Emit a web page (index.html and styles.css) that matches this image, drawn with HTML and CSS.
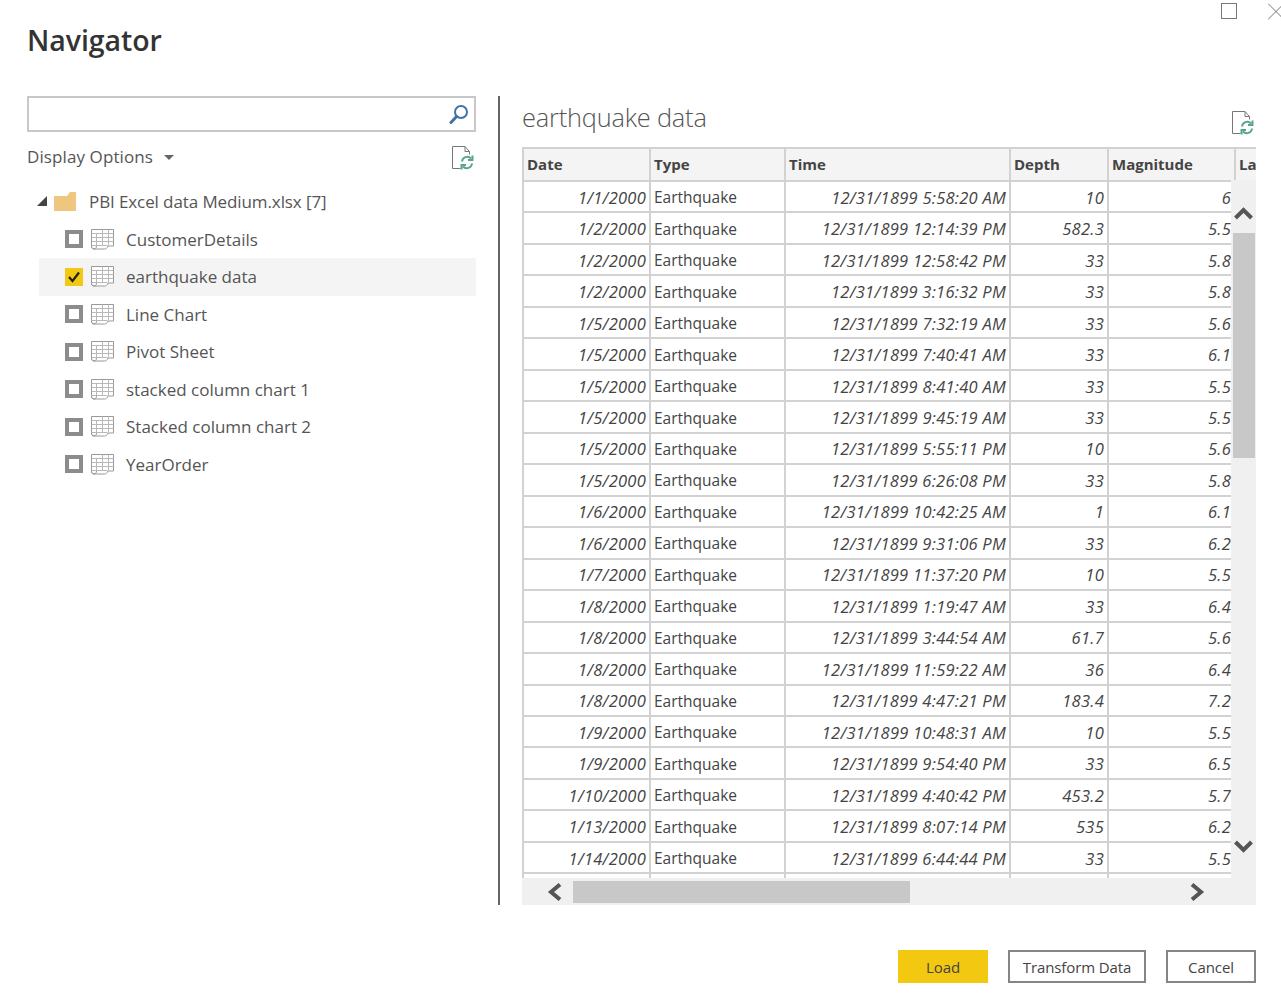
FILE: index.html
```html
<!DOCTYPE html>
<html lang="en">
<head>
<meta charset="utf-8">
<title>Navigator</title>
<link rel="stylesheet" href="styles.css">
</head>
<body>
<svg class="defs" width="0" height="0" aria-hidden="true">
  <symbol id="sheet" viewBox="0 0 23 21">
    <path d="M.5.5h22v16.5h-5.500c-.5 2-2 3-3.500 3H3c-1.500 0-2.500-1-2.500-3z" fill="#fff" stroke="#999"/>
    <path d="M.5 4.500h22M.5 8.500h22M.5 12.500h22M.5 16.500h16M5.500 4.500v12M11.500.5v16M17.500.5v16" fill="none" stroke="#b8b8b8"/>
    <path d="M.5 17c0 2 1 3 2.500 3s2.500-1 2.500-3" fill="none" stroke="#999"/>
  </symbol>
  <symbol id="refresh" viewBox="0 0 22 24">
    <path d="M13 .5H.5v22h8M13 .5v5h4.500M13 .5l4.500 5v3" fill="none" stroke="#777"/>
    <path d="M10 15.500a5.200 5.200 0 0 1 9-3M20.500 9.500V14H16M20 17.500a5.200 5.200 0 0 1-9 3M9.500 23.500V19H14" fill="none" stroke="#5aa58a" stroke-width="2"/>
  </symbol>
</svg>

<div class="win-controls">
  <span class="maximize"></span>
  <svg class="close" width="14" height="17" viewBox="0 0 14 17"><path d="M0 .5l16 16M16 .5l-16 16" fill="none" stroke="#777"/></svg>
</div>

<h1 class="title">Navigator</h1>

<main class="main">
  <section class="left">
    <div class="search">
      <svg width="20" height="20" viewBox="0 0 20 20"><circle cx="12" cy="8" r="6" fill="none" stroke="#3f73a8" stroke-width="2"/><path d="M7.500 12.500L2 18.500" fill="none" stroke="#3f73a8" stroke-width="3" stroke-linecap="round"/></svg>
    </div>
    <div class="options">
      <span class="options-label">Display Options</span>
      <span class="caret"></span>
      <svg class="refresh-left" width="22" height="24"><use href="#refresh"/></svg>
    </div>
    <div class="tree-root">
      <span class="twist"></span>
      <svg class="folder" width="22" height="19" viewBox="0 0 22 19"><path d="M0 4h13l3-4h6v19H0z" fill="#eec67f"/></svg>
      <span>PBI Excel data Medium.xlsx [7]</span>
    </div>
    <ul class="tree">
      <li class="item"><span class="check"></span><svg width="23" height="21"><use href="#sheet"/></svg><span class="label">CustomerDetails</span></li>
      <li class="item selected"><span class="check checked"><svg width="18" height="18" viewBox="0 0 18 18"><path d="M4 9l3.500 4L14 4.500" fill="none" stroke="#222" stroke-width="2.200"/></svg></span><svg width="23" height="21"><use href="#sheet"/></svg><span class="label">earthquake data</span></li>
      <li class="item"><span class="check"></span><svg width="23" height="21"><use href="#sheet"/></svg><span class="label">Line Chart</span></li>
      <li class="item"><span class="check"></span><svg width="23" height="21"><use href="#sheet"/></svg><span class="label">Pivot Sheet</span></li>
      <li class="item"><span class="check"></span><svg width="23" height="21"><use href="#sheet"/></svg><span class="label">stacked column chart 1</span></li>
      <li class="item"><span class="check"></span><svg width="23" height="21"><use href="#sheet"/></svg><span class="label">Stacked column chart 2</span></li>
      <li class="item"><span class="check"></span><svg width="23" height="21"><use href="#sheet"/></svg><span class="label">YearOrder</span></li>
    </ul>
  </section>

  <div class="divider"></div>

  <section class="right">
    <div class="preview-head">
      <h2 class="preview-title">earthquake data</h2>
      <svg class="refresh-right" width="22" height="24"><use href="#refresh"/></svg>
    </div>
    <div class="grid-wrap">
      <div class="grid-view">
        <table class="grid">
          <colgroup><col class="c1"><col class="c2"><col class="c3"><col class="c4"><col class="c5"><col class="c6"></colgroup>
          <thead><tr><th>Date</th><th>Type</th><th>Time</th><th>Depth</th><th>Magnitude</th><th>Latitude</th></tr></thead>
          <tbody>
            <tr><td>1/1/2000</td><td>Earthquake</td><td>12/31/1899 5:58:20 AM</td><td>10</td><td>6</td><td></td></tr>
            <tr><td>1/2/2000</td><td>Earthquake</td><td>12/31/1899 12:14:39 PM</td><td>582.3</td><td>5.5</td><td></td></tr>
            <tr><td>1/2/2000</td><td>Earthquake</td><td>12/31/1899 12:58:42 PM</td><td>33</td><td>5.8</td><td></td></tr>
            <tr><td>1/2/2000</td><td>Earthquake</td><td>12/31/1899 3:16:32 PM</td><td>33</td><td>5.8</td><td></td></tr>
            <tr><td>1/5/2000</td><td>Earthquake</td><td>12/31/1899 7:32:19 AM</td><td>33</td><td>5.6</td><td></td></tr>
            <tr><td>1/5/2000</td><td>Earthquake</td><td>12/31/1899 7:40:41 AM</td><td>33</td><td>6.1</td><td></td></tr>
            <tr><td>1/5/2000</td><td>Earthquake</td><td>12/31/1899 8:41:40 AM</td><td>33</td><td>5.5</td><td></td></tr>
            <tr><td>1/5/2000</td><td>Earthquake</td><td>12/31/1899 9:45:19 AM</td><td>33</td><td>5.5</td><td></td></tr>
            <tr><td>1/5/2000</td><td>Earthquake</td><td>12/31/1899 5:55:11 PM</td><td>10</td><td>5.6</td><td></td></tr>
            <tr><td>1/5/2000</td><td>Earthquake</td><td>12/31/1899 6:26:08 PM</td><td>33</td><td>5.8</td><td></td></tr>
            <tr><td>1/6/2000</td><td>Earthquake</td><td>12/31/1899 10:42:25 AM</td><td>1</td><td>6.1</td><td></td></tr>
            <tr><td>1/6/2000</td><td>Earthquake</td><td>12/31/1899 9:31:06 PM</td><td>33</td><td>6.2</td><td></td></tr>
            <tr><td>1/7/2000</td><td>Earthquake</td><td>12/31/1899 11:37:20 PM</td><td>10</td><td>5.5</td><td></td></tr>
            <tr><td>1/8/2000</td><td>Earthquake</td><td>12/31/1899 1:19:47 AM</td><td>33</td><td>6.4</td><td></td></tr>
            <tr><td>1/8/2000</td><td>Earthquake</td><td>12/31/1899 3:44:54 AM</td><td>61.7</td><td>5.6</td><td></td></tr>
            <tr><td>1/8/2000</td><td>Earthquake</td><td>12/31/1899 11:59:22 AM</td><td>36</td><td>6.4</td><td></td></tr>
            <tr><td>1/8/2000</td><td>Earthquake</td><td>12/31/1899 4:47:21 PM</td><td>183.4</td><td>7.2</td><td></td></tr>
            <tr><td>1/9/2000</td><td>Earthquake</td><td>12/31/1899 10:48:31 AM</td><td>10</td><td>5.5</td><td></td></tr>
            <tr><td>1/9/2000</td><td>Earthquake</td><td>12/31/1899 9:54:40 PM</td><td>33</td><td>6.5</td><td></td></tr>
            <tr><td>1/10/2000</td><td>Earthquake</td><td>12/31/1899 4:40:42 PM</td><td>453.2</td><td>5.7</td><td></td></tr>
            <tr><td>1/13/2000</td><td>Earthquake</td><td>12/31/1899 8:07:14 PM</td><td>535</td><td>6.2</td><td></td></tr>
            <tr><td>1/14/2000</td><td>Earthquake</td><td>12/31/1899 6:44:44 PM</td><td>33</td><td>5.5</td><td></td></tr>
            <tr><td></td><td></td><td></td><td></td><td></td><td></td></tr>
          </tbody>
        </table>
      </div>
      <div class="vscroll">
        <svg width="19" height="14" viewBox="0 0 19 14"><path d="M1.500 12L9.500 4l8 8" fill="none" stroke="#555" stroke-width="4"/></svg>
        <span class="vthumb"></span>
        <svg class="vdown" width="19" height="14" viewBox="0 0 19 14"><path d="M1.500 2L9.500 10l8-8" fill="none" stroke="#555" stroke-width="4"/></svg>
      </div>
      <div class="hscroll">
        <svg class="hleft" width="15" height="18" viewBox="0 0 15 18"><path d="M13 1.500L4 9l9 7.500" fill="none" stroke="#555" stroke-width="4"/></svg>
        <span class="hthumb"></span>
        <svg class="hright" width="15" height="18" viewBox="0 0 15 18"><path d="M2 1.500L11 9l-9 7.500" fill="none" stroke="#555" stroke-width="4"/></svg>
      </div>
    </div>
  </section>
</main>

<footer class="footer">
  <button class="btn btn-load" type="button">Load</button>
  <button class="btn btn-transform" type="button">Transform Data</button>
  <button class="btn btn-cancel" type="button">Cancel</button>
</footer>
</body>
</html>
```
FILE: styles.css
```css
* { box-sizing: border-box; }
html, body { margin: 0; padding: 0; }
body {
  width: 1281px;
  height: 994px;
  overflow: hidden;
  position: relative;
  background: #fff;
  color: #444;
  font-family: "Open Sans", "Noto Sans", sans-serif;
  font-size: 16px;
}
.defs { position: absolute; }
.win-controls { position: absolute; top: 3px; left: 1221px; display: flex; gap: 31px; }
.maximize { width: 16px; height: 16px; border: 1px solid #777; }
.close { display: block; }
.title {
  margin: 0;
  padding: 21px 0 0 27px;
  height: 96px;
  font-size: 28.5px;
  line-height: 38px;
  font-weight: 600;
  color: #333;
  letter-spacing: -0.06px;
}
.main { display: flex; height: 809px; padding-left: 27px; }
.left { width: 449px; }
.divider { width: 2px; margin-left: 22px; background: #666; }
.right { width: 734px; margin-left: 22px; display: flex; flex-direction: column; }
.search {
  height: 36px;
  border: 2px solid #c8c8c8;
  display: flex;
  justify-content: flex-end;
  align-items: center;
  padding-right: 5px;
}
.search svg { display: block; }
.options { display: flex; align-items: center; height: 50px; font-size: 17px; color: #555; letter-spacing: 0.1px; position: relative; }
.options-label { margin-top: -1px; }
.caret { margin-left: 11px; border: 5px solid transparent; border-top: 5px solid #666; border-bottom: 0; width: 0; height: 0; }
.refresh-left { margin-left: auto; margin-right: 2px; margin-top: 2px; }
.tree-root { display: flex; align-items: center; height: 38.5px; padding-left: 10px; font-size: 17px; color: #555; letter-spacing: -0.1px; }
.twist { width: 0; height: 0; border-style: solid; border-width: 0 0 10px 10px; border-color: transparent transparent #444 transparent; margin-right: 7px; }
.folder { margin-right: 13px; }
.tree { list-style: none; margin: 0; padding: 0 0 0 12px; }
.item { display: flex; align-items: center; height: 37.5px; padding-left: 26px; font-size: 17px; color: #555; letter-spacing: 0; }
.item.selected { background: #f4f4f4; }
.check { width: 18px; height: 18px; border: 4px solid #8c8c8c; background: #fff; margin-right: 8px; flex: none; }
.check.checked { border: 0; background: #f2c811; }
.check svg { display: block; }
.item svg { flex: none; }
.label { margin-left: 12px; }
.preview-head { height: 51px; display: flex; justify-content: space-between; align-items: flex-start; }
.preview-title { margin: 0; font-size: 25.4px; line-height: 43px; font-weight: 300; color: #555; letter-spacing: -0.2px; }
.refresh-right { margin-top: 15px; margin-right: 2px; }
.grid-wrap { position: relative; height: 758px; background: #f0f0f0; }
.grid-view { height: 731px; overflow: hidden; background: #fff; }
.grid { border-collapse: collapse; table-layout: fixed; width: 780px; font-size: 16.5px; color: #444; }
.c1 { width: 127px; } .c2 { width: 135px; } .c3 { width: 225px; } .c4 { width: 98px; } .c5 { width: 127px; } .c6 { width: 68px; }
.grid th, .grid td { border: 2px solid #d2d2d2; padding: 0 3px; white-space: nowrap; overflow: hidden; }
.grid th { height: 33px; padding-bottom: 1px; background: #f4f4f4; text-align: left; font-weight: 700; font-size: 15px; color: #444; }
.grid td { height: 31.48px; font-style: italic; text-align: right; letter-spacing: 0.25px; padding-top: 1px; }
.grid td:nth-child(2) { font-style: normal; text-align: left; font-size: 15.5px; letter-spacing: 0; }
.vscroll { position: absolute; top: 33px; right: 0; width: 25px; height: 698px; background: #f0f0f0; display: flex; flex-direction: column; align-items: center; padding-top: 26px; }
.vthumb { width: 22px; height: 225px; margin-top: 13px; background: #c8c8c8; }
.vdown { margin-top: auto; margin-bottom: 24px; }
.vscroll svg { display: block; flex: none; }
.hscroll { position: absolute; left: 0; right: 0; bottom: 0; height: 27px; display: flex; align-items: center; background: #f0f0f0; }
.hleft { margin-left: 25px; }
.hthumb { width: 337px; height: 22px; margin-left: 11px; background: #c8c8c8; }
.hright { margin-left: auto; margin-right: 51px; }
.footer { display: flex; justify-content: flex-end; gap: 20px; padding: 45px 25px 0 0; }
.btn { height: 33px; font: inherit; font-size: 15px; color: #444; background: #fff; border: 2px solid #858585; padding: 0; letter-spacing: -0.1px; }
.btn-load { width: 90px; background: #f2c811; border-color: #f2c811; }
.btn-transform { width: 138px; }
.btn-cancel { width: 90px; }
```
